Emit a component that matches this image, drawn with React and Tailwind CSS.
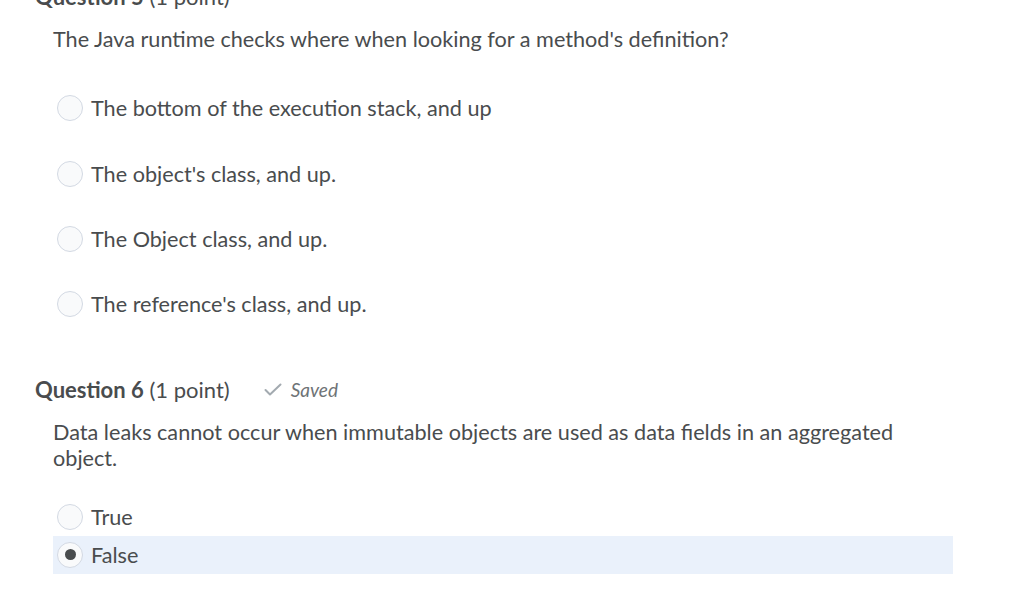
import React from "react";

function Radio({ checked }) {
  return (
    <span className="flex h-[26px] w-[26px] shrink-0 items-center justify-center rounded-full border border-[#d3d9e3] bg-[#f9fafb]">
      {checked && <span className="h-[11px] w-[11px] rounded-full bg-[#494c4e]" />}
    </span>
  );
}

function Option({ label, checked, className = "" }) {
  return (
    <div className={"flex h-[38px] w-[900px] items-center gap-[8px] pl-[4px] " + className}>
      <Radio checked={checked} />
      <span className="text-[21.65px] leading-[26px]">{label}</span>
    </div>
  );
}

export default function App() {
  return (
    <div className="h-[598px] w-[1024px] overflow-hidden bg-white font-['Lato',sans-serif] text-[#494c4e]">
      <div className="pl-[35px]">
        <h2 className="-mt-[18px] text-[22px] leading-[30px]">
          <span className="font-bold">Question 5</span> (1 point)
        </h2>
        <p className="ml-[18px] mt-[13.7px] text-[21.65px] leading-[26px]">
          The Java runtime checks where when looking for a method's definition?
        </p>
        <div className="ml-[18px] mt-[37.8px] flex flex-col gap-[27.33px]">
          <Option label="The bottom of the execution stack, and up" />
          <Option label="The object's class, and up." />
          <Option label="The Object class, and up." />
          <Option label="The reference's class, and up." />
        </div>
        <div className="mt-[51.3px] flex h-[30px] items-center">
          <h2 className="text-[22px] leading-[30px]">
            <span className="font-bold">Question 6</span> (1 point)
          </h2>
          <svg className="ml-[34px]" width="18" height="13" viewBox="0 0 18 13" fill="none">
            <path d="M1.5 7 L6 11.5 L16.5 1.5" stroke="#a3aab0" strokeWidth="2" strokeLinecap="round" strokeLinejoin="round" />
          </svg>
          <span className="ml-[9px] text-[19px] italic text-[#6e7376]">Saved</span>
        </div>
        <p className="ml-[18px] mt-[14.6px] text-[21.65px] leading-[26px]">
          Data leaks cannot occur when immutable objects are used as data fields in an aggregated
          <br />
          object.
        </p>
        <div className="ml-[18px] mt-[26.6px] flex flex-col">
          <Option label="True" />
          <Option label="False" checked className="bg-[#eaf1fb]" />
        </div>
      </div>
    </div>
  );
}
